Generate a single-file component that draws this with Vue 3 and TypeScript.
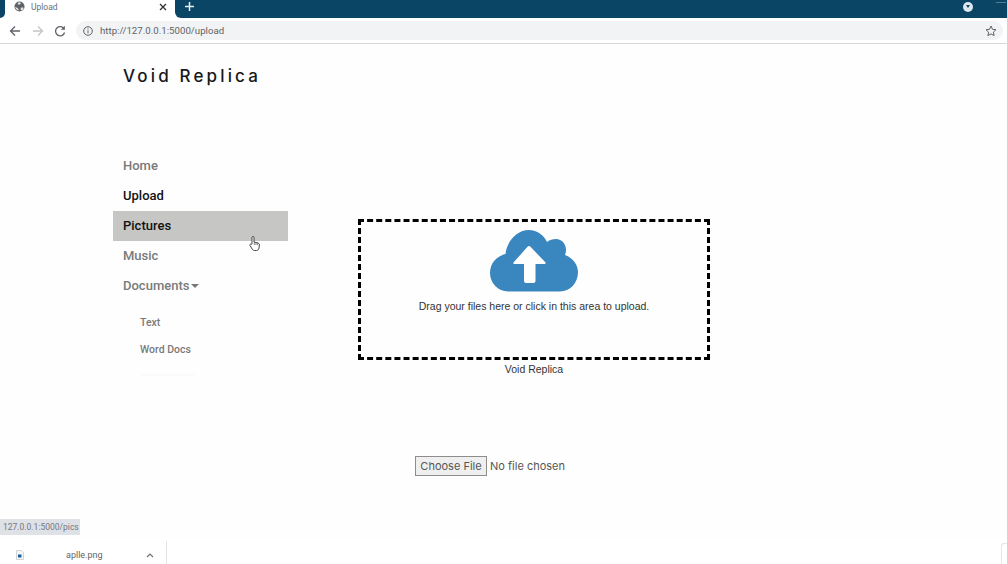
<script setup lang="ts">
const mainNav = [
  { label: 'Home', cls: '' },
  { label: 'Upload', cls: 'dark' },
  { label: 'Pictures', cls: 'dark active' },
  { label: 'Music', cls: '' },
]
const subNav = ['Text', 'Word Docs']
</script>

<template>
  <div class="window">
    <div class="tabstrip">
      <div class="strip-left"></div>
      <div class="tab">
        <svg class="globe" width="11" height="11" viewBox="0 0 12 12">
          <circle cx="6" cy="6" r="5.500" fill="#5f6368" />
          <path d="M5.200 1.300 7.500 1.800 7 3.300 5.500 4 3.800 3.300ZM7.500 7.300 9.800 6.800 10.500 8.200 8.600 10.300 7.300 9.500ZM1.200 6.500 3.400 7.300 5 8.800 4.800 10.400A4.800 4.800 0 0 1 1.200 6.500Z" fill="#fff" opacity=".85" />
        </svg>
        <span class="tab-title">Upload</span>
        <svg class="tab-close" width="8" height="8" viewBox="0 0 8 8">
          <path d="M1 1l6 6M7 1 1 7" stroke="#303134" stroke-width="1.300" />
        </svg>
      </div>
      <div class="strip-right">
        <svg class="plus" width="9" height="9" viewBox="0 0 9 9">
          <path d="M4.500 0v9M0 4.500h9" stroke="#e8eef2" stroke-width="1.500" />
        </svg>
        <span class="spacer"></span>
        <span class="profile"><i></i></span>
        <span class="minimize"></span>
      </div>
    </div>

    <div class="toolbar">
      <svg class="tool" width="12" height="12" viewBox="0 0 12 12">
        <path d="M11 6H2M6 1.500 1.500 6 6 10.500" fill="none" stroke="#5f6368" stroke-width="1.300" />
      </svg>
      <svg class="tool" width="12" height="12" viewBox="0 0 12 12">
        <path d="M1 6h9M6 1.500 10.500 6 6 10.500" fill="none" stroke="#c3c5c8" stroke-width="1.300" />
      </svg>
      <svg class="tool" width="12" height="12" viewBox="0 0 12 12">
        <path d="M10.300 4.200A4.600 4.600 0 1 0 10.600 7.500" fill="none" stroke="#5f6368" stroke-width="1.300" />
        <path d="M10.800 .8v4H6.800z" fill="#5f6368" />
      </svg>
      <div class="omnibox">
        <svg width="10" height="10" viewBox="0 0 10 10">
          <circle cx="5" cy="5" r="4.300" fill="none" stroke="#5f6368" stroke-width="1" />
          <path d="M5 4.300v3M5 2.400v1" stroke="#5f6368" stroke-width="1" />
        </svg>
        <span class="url">http://127.0.0.1:5000/upload</span>
        <svg class="star" width="12" height="12" viewBox="0 0 12 12">
          <path d="M6 1l1.500 3.300 3.500 .4-2.600 2.400 .7 3.500L6 8.900l-3.100 1.700 .7-3.500L1 4.700l3.500-.4z" fill="none" stroke="#5f6368" stroke-width="1" />
        </svg>
      </div>
    </div>

    <div class="page">
      <aside class="sidebar">
        <h1 class="brand">Void Replica</h1>
        <nav class="nav">
          <a v-for="item in mainNav" :key="item.label" class="nav-item" :class="item.cls">{{ item.label }}</a>
          <a class="nav-item">Documents<i class="caret"></i></a>
          <div class="subnav">
            <a v-for="item in subNav" :key="item" class="sub-item">{{ item }}</a>
            <div class="ghost"></div>
          </div>
        </nav>
      </aside>

      <main class="content">
        <div class="dropzone">
          <svg class="cloud" width="88" height="62" viewBox="0 0 88 62">
            <path fill="#3a87bf" d="M18 61.500C8 61.500 0 53 0 43 0 33 7 26 15.500 24 17 11 27 0 39 0 47 0 54 5 57 12 59 10 63 9 66 9 72 9 76 14 76 20 76 22 75.500 23.500 75 25 83 28 88 35 88 42 88 53 80 61.500 70 61.500Z" />
            <path fill="#fff" d="M34 51V34H24.500a1 1 0 0 1-.8-1.700L37.500 16.800a2 2 0 0 1 3 0L55.300 32.300a1 1 0 0 1-.8 1.700H45.500V51a2 2 0 0 1-2 2H36a2 2 0 0 1-2-2Z" />
          </svg>
          <p class="drop-text">Drag your files here or click in this area to upload.</p>
        </div>
        <p class="caption">Void Replica</p>
        <div class="file-row">
          <button class="file-btn" type="button">Choose File</button>
          <span class="file-name">No file chosen</span>
        </div>
      </main>

      <svg class="pointer" width="11" height="15" viewBox="0 0 11 15">
        <path d="M3 8V1.500a1 1 0 0 1 2 0V6l4 1c1 .3 1.500 1 1.400 2L10 12c-.2 1.300-1 2.500-2.500 2.500H5.500C4.500 14.500 3.800 14 3.200 13L1 9.500c-.5-1 .8-2 1.500-1.200z" fill="#fff" stroke="#333" stroke-width=".9" />
        <path d="M5.300 6.500v2.500M7 7v2M8.600 7.400v1.800" stroke="#333" stroke-width=".6" />
      </svg>
      <div class="status">127.0.0.1:5000/pics</div>
    </div>

    <div class="downloads">
      <svg class="file-icon" width="8" height="10" viewBox="0 0 8 10">
        <path d="M.5 .5h5l2 2v7h-7z" fill="#f4f6f8" stroke="#c5cbd2" stroke-width=".8" />
        <rect x="2" y="4.500" width="3.500" height="3" fill="#1f5f97" />
      </svg>
      <span class="dl-name">aplle.png</span>
      <svg class="chev" width="8" height="5" viewBox="0 0 8 5">
        <path d="M1 4l3-3 3 3" fill="none" stroke="#6f7276" stroke-width="1.200" />
      </svg>
      <span class="dl-sep"></span>
      <span class="spacer"></span>
      <span class="show-all"></span>
    </div>
  </div>
</template>

<style>
html, body { margin: 0; background: #fff; overflow: hidden; }
</style>

<style scoped>
.window {
  width: 1007px;
  height: 564px;
  display: flex;
  flex-direction: column;
  overflow: hidden;
  background: #fefefe;
  font-family: "Liberation Sans", Arial, sans-serif;
}
.tabstrip { height: 18px; display: flex; flex: none; background: #fff; }
.strip-left { width: 5px; background: #0a4566; border-bottom-right-radius: 5px; }
.tab {
  width: 170px;
  display: flex;
  align-items: center;
  padding: 0 8px 5px 9px;
  box-sizing: border-box;
  background: #fff;
}
.tab-title { margin-left: 6px; font: 8.500px "Roboto", sans-serif; color: #6d6f72; flex: 1; }
.strip-right {
  flex: 1;
  display: flex;
  align-items: center;
  background: #0a4566;
  border-bottom-left-radius: 6px;
  padding: 0 0 5px 10px;
}
.spacer { flex: 1; }
.profile {
  width: 10px;
  height: 10px;
  border-radius: 50%;
  background: #dfe7ee;
  display: flex;
  align-items: center;
  justify-content: center;
  margin-right: 23px;
}
.profile i {
  width: 0;
  height: 0;
  border: 2px solid transparent;
  border-top: 3px solid #0a4566;
  border-bottom: 0;
}
.minimize {
  width: 10px;
  height: 1px;
  background: #4f7c96;
  margin: 0 1px 9px 0;
}
.toolbar {
  height: 26px;
  flex: none;
  box-sizing: border-box;
  display: flex;
  align-items: center;
  padding: 0 4px 0 9px;
  background: #fff;
  border-bottom: 1px solid #d6d8da;
}
.tool { margin-right: 10.500px; }
.omnibox {
  flex: 1;
  height: 19px;
  margin-left: -0.500px;
  border-radius: 10px;
  background: #f1f3f4;
  display: flex;
  align-items: center;
  padding: 0 6px 0 7px;
}
.url { flex: 1; margin-left: 7px; font: 9.700px "Roboto", sans-serif; color: #5f6368; }
.page { flex: 1; display: flex; position: relative; min-height: 0; }
.sidebar { width: 175px; margin-left: 113px; flex: none; }
.brand {
  margin: 23px 0 0 10px;
  height: 18px;
  font: 500 17px/18px "Inter", sans-serif;
  letter-spacing: 3.150px;
  color: #17181a;
}
.nav { margin-top: 66px; display: flex; flex-direction: column; }
.nav-item {
  height: 30px;
  padding-left: 10px;
  font: 500 13px/30px "Roboto", sans-serif;
  color: #7a7a7a;
}
.nav-item.dark { color: #111; }
.nav-item.active { background: #c6c7c4; }
.caret {
  display: inline-block;
  margin-left: 2px;
  vertical-align: 2px;
  border: 4px solid transparent;
  border-top: 4px solid #777;
  border-bottom: 0;
}
.subnav { display: flex; flex-direction: column; padding: 8px 0 0 27px; }
.sub-item {
  height: 27px;
  font: 500 10.500px/27px "Roboto", sans-serif;
  color: #7a7a7a;
}
.ghost { width: 55px; height: 2px; margin-top: 11px; background: #fbfbfb; }
.content { margin-left: 70px; width: 352px; flex: none; display: flex; flex-direction: column; }
.dropzone {
  margin-top: 175px;
  height: 141px;
  box-sizing: border-box;
  border: 3px dashed #000;
  display: flex;
  flex-direction: column;
  align-items: center;
}
.cloud { margin-top: 8px; flex: none; }
.drop-text { margin: 8px 0 0; font-size: 10.500px; line-height: 13px; color: #333; }
.caption { margin: 3px 0 0; text-align: center; font-size: 10.500px; line-height: 13px; color: #333; }
.file-row { margin: 80px 0 0 57px; display: flex; align-items: center; }
.file-btn {
  width: 72px;
  height: 20px;
  padding: 0;
  box-sizing: border-box;
  border: 1px solid #8d8d8d;
  background: #efefef;
  font: 11px "Inter", sans-serif;
  color: #555;
}
.file-name { margin-left: 3px; font: 11px "Inter", sans-serif; color: #555; }
.pointer { position: absolute; left: 249px; top: 192px; }
.status {
  position: absolute;
  left: 0;
  bottom: 3px;
  width: 80px;
  height: 16px;
  padding-left: 3px;
  box-sizing: border-box;
  background: #dee1e6;
  font: 8.500px/16px "Roboto", sans-serif;
  color: #74787e;
}
.downloads {
  height: 26px;
  flex: none;
  display: flex;
  align-items: center;
  padding-top: 8px;
  box-sizing: border-box;
  background: #fff;
}
.file-icon { margin-left: 16px; }
.dl-name { margin-left: 42px; font: 9px "Roboto", sans-serif; color: #5f6368; }
.chev { margin-left: 43px; }
.dl-sep { width: 1px; height: 23px; align-self: flex-end; margin-left: 12px; background: #e2e3e4; }
.show-all {
  width: 6px;
  height: 21px;
  align-self: flex-end;
  box-sizing: border-box;
  border: 1px solid #e4e5e6;
  border-right: 0;
  border-bottom: 0;
  border-top-left-radius: 3px;
}
</style>
